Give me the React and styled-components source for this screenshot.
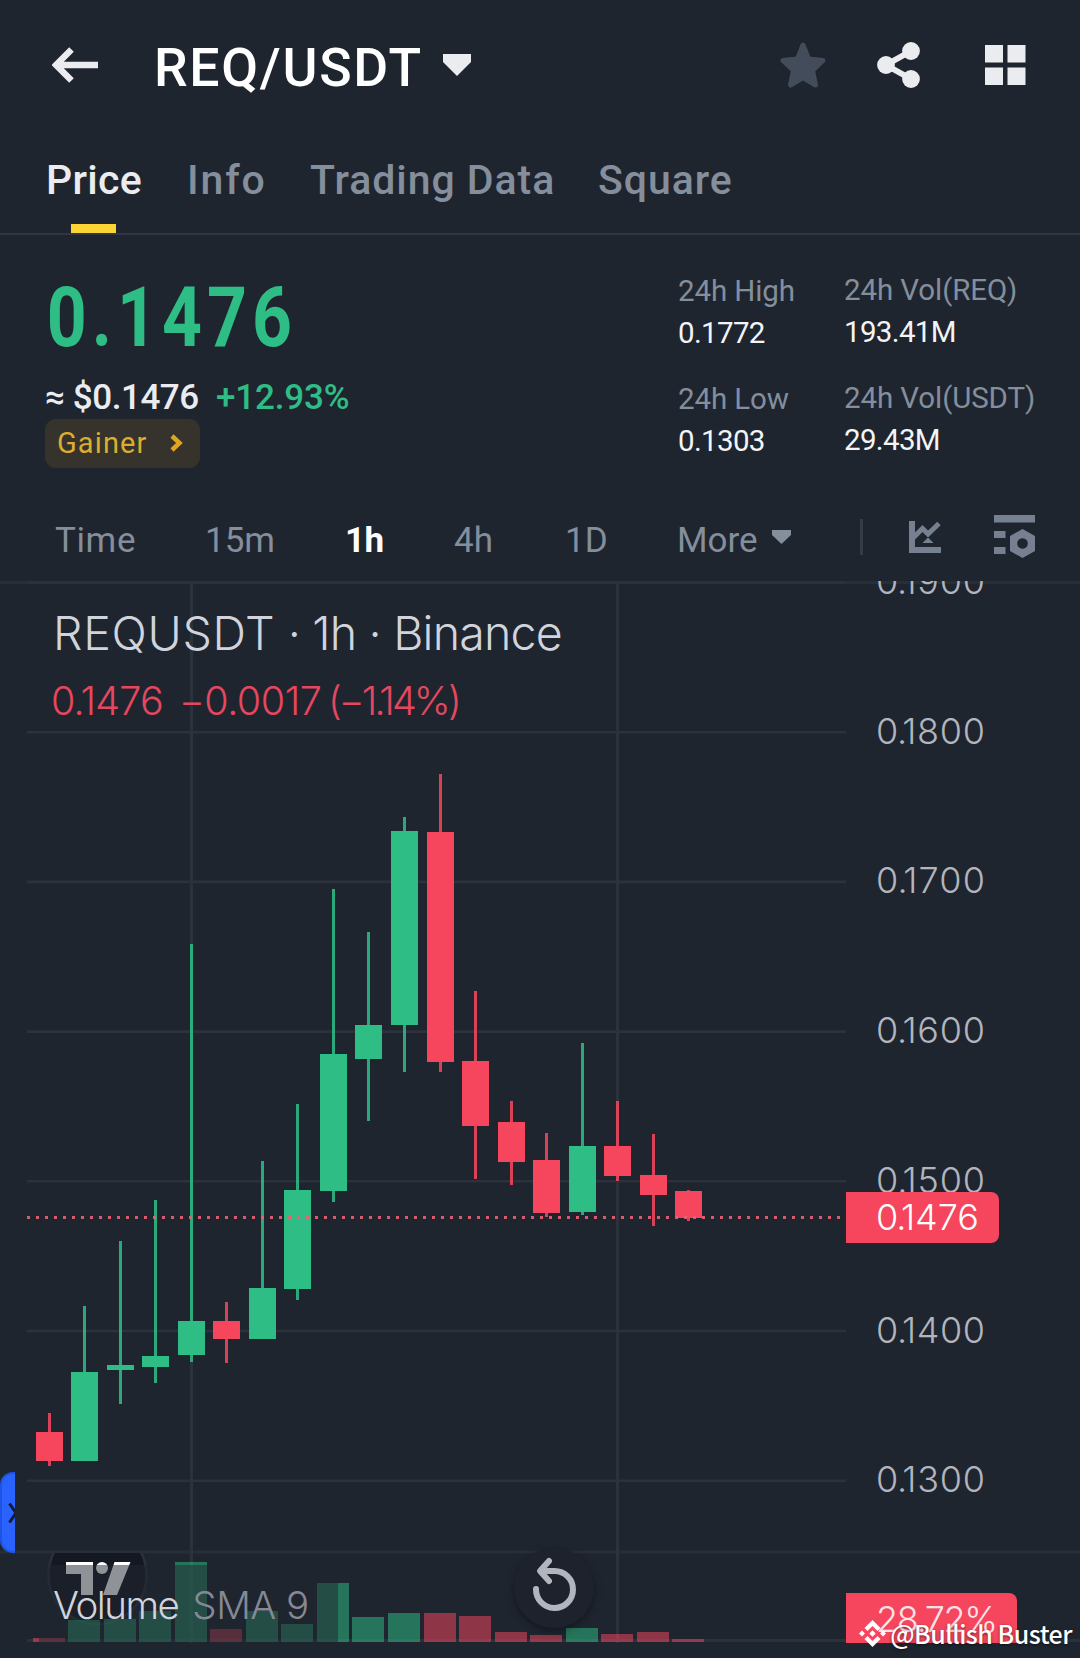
import React from "react"
import styled, { createGlobalStyle } from "styled-components"

const GREEN = "#2ebd85"
const RED = "#f6465d"
const BG = "#1f252f"
const MUTED = "#848e9c"

const GlobalStyle = createGlobalStyle`
  body {
    margin: 0;
    background: ${BG};
    overflow: hidden;
  }
  * {
    box-sizing: border-box;
  }
`

const Page = styled.main`
  width: 1080px;
  height: 1658px;
  display: flex;
  flex-direction: column;
  background: ${BG};
  color: #eaecef;
  font-family: Roboto, "Liberation Sans", sans-serif;
  white-space: nowrap;
  overflow: hidden;
`

const Header = styled.header`
  height: 132px;
  padding: 0 54px 2px 52px;
  display: flex;
  align-items: center;
`

const Title = styled.h1`
  width: 268px;
  margin: 5px 21px 0 56px;
  font-size: 53.5px;
  line-height: 60px;
  font-weight: 500;
  letter-spacing: 1.7px;
  color: #fff;
`

const HeaderActions = styled.div`
  flex: 1;
  display: flex;
  justify-content: flex-end;
  align-items: center;
`

const ShareIcon = styled.svg`
  margin: 0 65px 0 51px;
`

const Tabs = styled.nav`
  height: 103px;
  display: grid;
  grid-template-columns: 141px 123px 288px 200px;
  padding-left: 46px;
  border-bottom: 2px solid #2f3641;
`

const Tab = styled.a`
  position: relative;
  padding-top: 20px;
  font-size: 41px;
  line-height: 56px;
  font-weight: 500;
  letter-spacing: ${p => p.$spacing || 0}px;
  color: ${p => (p.$active ? "#eaecef" : MUTED)};
  &::after {
    content: "";
    display: ${p => (p.$active ? "block" : "none")};
    position: absolute;
    left: 25px;
    bottom: 0;
    width: 45px;
    height: 9px;
    background: #fcd535;
  }
`

const Summary = styled.section`
  height: 265px;
  padding-top: 34px;
  padding-left: 45px;
  display: grid;
  grid-template-columns: 633px 166px 1fr;
`

const LastPrice = styled.div`
  height: 96px;
  padding-left: 2px;
  font-size: 83px;
  line-height: 97px;
  font-weight: 700;
  letter-spacing: 6px;
  color: ${GREEN};
  transform: scaleX(0.84);
  transform-origin: left center;
`

const SubPrice = styled.div`
  height: 53.5px;
  padding-top: 13px;
  display: flex;
  font-size: 35px;
  line-height: 40px;
  font-weight: 500;
`

const Fiat = styled.span`
  width: 171px;
  letter-spacing: -0.45px;
`

const Change = styled.span`
  color: ${GREEN};
  letter-spacing: -0.15px;
`

const Badge = styled.span`
  width: 155px;
  height: 49px;
  padding: 0 17px 0 12px;
  display: flex;
  align-items: center;
  justify-content: space-between;
  border-radius: 11px;
  background: #35332b;
  color: #dcae30;
  font-size: 29px;
  letter-spacing: 1.1px;
`

const StatColumn = styled.dl`
  margin: ${p => p.$top}px 0 0;
  font-size: 29.5px;
`

const StatLabel = styled.dt`
  line-height: 42px;
  letter-spacing: -0.1px;
  color: ${MUTED};
`

const StatValue = styled.dd`
  margin: 0 0 24px;
  line-height: 42px;
  letter-spacing: -0.65px;
  color: #f2f4f6;
`

const Intervals = styled.div`
  height: 81px;
  padding: 0 44px 1px 55px;
  display: grid;
  grid-template-columns: 150px 140px 109px 111px 112px 183px 49px 85px 1fr;
  align-items: center;
  font-size: 35px;
  color: ${MUTED};
`

const Interval = styled.span`
  display: flex;
  align-items: center;
  gap: 14px;
  letter-spacing: ${p => p.$spacing || 0}px;
  ${p => p.$active && "color: #fff; font-weight: 700;"}
  svg {
    margin-bottom: 6px;
  }
`

const Separator = styled.i`
  width: 3px;
  height: 36px;
  margin-bottom: 6px;
  background: #333b47;
`

const ToolIcon = styled.svg`
  margin-bottom: 7px;
`

const Chart = styled.section`
  position: relative;
  height: 1062px;
  font-family: Inter, "Liberation Sans", sans-serif;
  font-weight: 300;
  overflow: hidden;
`

const Plot = styled.svg`
  display: block;
`

const AxisText = styled.text`
  font-size: 36px;
  fill: ${p => p.$fill || "#b2b5be"};
`

const Legend = styled.div`
  position: absolute;
  left: 51px;
  top: 22px;
`

const Symbol = styled.div`
  padding-left: 2px;
  font-size: 46.5px;
  line-height: 60px;
  letter-spacing: -0.8px;
  color: #d1d4dc;
  span {
    letter-spacing: 0.7px;
  }
`

const SymbolChange = styled.div`
  margin-top: 8px;
  display: grid;
  grid-template-columns: 128px 149px auto;
  font-size: 39.5px;
  line-height: 60px;
  color: #e5485e;
`

const ChangePart = styled.span`
  letter-spacing: ${p => p.$spacing}px;
`

const VolumeLegend = styled.div`
  position: absolute;
  left: 53px;
  top: 994px;
  display: flex;
  gap: 14px;
  font-size: 38.5px;
  line-height: 60px;
  color: #d1d4dc;
  letter-spacing: -1.5px;
  span {
    color: #868993;
    letter-spacing: -0.5px;
  }
`

const DrawerHandle = styled.button`
  position: absolute;
  left: 0;
  top: 891px;
  width: 15px;
  height: 81px;
  padding: 0 0 0 6px;
  border: 3px solid #1e53e5;
  border-width: 2px 0 2px 2px;
  border-radius: 13px 0 0 13px;
  background: #2962ff;
  overflow: hidden;
  display: flex;
  align-items: center;
  svg {
    flex: none;
  }
`

const ResetButton = styled.button`
  position: absolute;
  left: 514px;
  top: 967px;
  width: 80px;
  height: 80px;
  padding: 0;
  border: 0;
  border-radius: 50%;
  background: #1e222d;
  box-shadow: 0 3px 8px rgba(0, 0, 0, 0.4);
`

const Footer = styled.div`
  position: relative;
  height: 15px;
`

const Watermark = styled.div`
  position: absolute;
  right: 8px;
  bottom: 7px;
  display: flex;
  align-items: center;
  gap: 4px;
  font-family: "Noto Sans CJK SC", "Noto Sans", sans-serif;
  font-size: 25px;
  line-height: 36px;
  font-weight: 500;
  letter-spacing: -0.5px;
  color: #fff;
  text-shadow: 0 1px 3px rgba(0, 0, 0, 0.6);
`

// x centre, wick top, wick bottom, body top, body bottom, rising
const candles = [
  [49.5, 1413, 1466, 1432, 1461, false],
  [84.5, 1306, 1461, 1372, 1461, true],
  [120.5, 1241, 1404, 1365, 1370, true],
  [155.5, 1200, 1383, 1356, 1367, true],
  [191.5, 944, 1362, 1321, 1355, true],
  [226.5, 1302, 1363, 1321, 1339, false],
  [262.5, 1161, 1339, 1288, 1339, true],
  [297.5, 1104, 1300, 1190, 1289, true],
  [333.5, 889, 1202, 1054, 1191, true],
  [368.5, 932, 1121, 1025, 1059, true],
  [404.5, 817, 1072, 831, 1025, true],
  [440.5, 774, 1072, 832, 1062, false],
  [475.5, 991, 1179, 1061, 1126, false],
  [511.5, 1101, 1185, 1122, 1162, false],
  [546.5, 1133, 1217, 1160, 1213, false],
  [582.5, 1043, 1215, 1146, 1212, true],
  [617.5, 1101, 1181, 1146, 1176, false],
  [653.5, 1134, 1226, 1175, 1195, false],
  [688.5, 1190, 1221, 1191, 1218, false],
]

const volumeTops = [
  1638, 1620, 1619, 1611, 1562, 1629, 1611, 1624, 1583, 1617, 1613, 1613, 1616,
  1632, 1635, 1628, 1634, 1632, 1639,
]

const prices = ["0.1900", "0.1800", "0.1700", "0.1600", "0.1500", "0.1400", "0.1300"]

function Caret({ width, height, color }) {
  return (
    <svg width={width} height={height} viewBox="0 0 28 22" preserveAspectRatio="none">
      <path d="M0 0H28V8L14 22L0 8Z" fill={color} />
    </svg>
  )
}

function ChartPlot() {
  return (
    <Plot width="1080" height="1062" viewBox="0 581 1080 1062">
      <path d="M0 582.5H1080M0 1552H1080" stroke="#282e38" strokeWidth="3" />
      {prices.map((p, i) => (
        <path
          key={p}
          d={`M27 ${582.5 + i * 149.7}H846`}
          stroke="#2c323c"
          strokeWidth="2.6"
        />
      ))}
      <path d="M27 1640.5H1080" stroke="#2b313b" strokeWidth="3" />
      <path d="M191.5 581V1643M617.5 581V1643" stroke="#2c323c" strokeWidth="3" />

      <clipPath id="volume-pane">
        <rect x="0" y="1553" width="1080" height="90" />
      </clipPath>
      <circle
        cx="97.5"
        cy="1575"
        r="49"
        fill="#141823"
        stroke="#2b303a"
        strokeWidth="2.5"
        clipPath="url(#volume-pane)"
      />
      <g fill="#fff">
        <path d="M66 1562H93V1595H81V1574H66ZM114.5 1562H130.5L117 1595H103Z" />
        <circle cx="102" cy="1568" r="6" />
      </g>

      {volumeTops.map((top, i) => (
        <rect
          key={i}
          x={Math.floor(candles[i][0] - 16.5)}
          y={top}
          width="32"
          height={1642 - top}
          fill={candles[i][5] ? GREEN : RED}
          opacity="0.52"
        />
      ))}
      <rect x="39" y="1565" width="299" height="77" fill={BG} opacity="0.5" />

      {candles.map(([x, high, low, top, bottom, up]) => (
        <g key={x} fill={up ? GREEN : RED}>
          <rect x={x - 1.5} y={high} width="3" height={low - high} opacity="0.87" />
          <rect x={x - 13.5} y={top} width="27" height={bottom - top} />
        </g>
      ))}
      <path d="M27 1217.5H842" stroke="#ee6072" strokeWidth="3" strokeDasharray="3 6" opacity="0.9" />

      {prices.map((p, i) => (
        <AxisText key={p} x="876" y={594 + i * 149.7} dx="0 -1 -2.5" textLength="109">
          {p}
        </AxisText>
      ))}
      <path d="M846 1192H991a8 8 0 0 1 8 8V1235a8 8 0 0 1 -8 8H846Z" fill={RED} />
      <AxisText $fill="#fff" x="876" y="1230" dx="0 -1 -2.5" textLength="103">
        0.1476
      </AxisText>
      <path d="M846 1593H1009a8 8 0 0 1 8 8V1643H846Z" fill={RED} />
      <AxisText $fill="#fde3e7" x="876" y="1631.5" textLength="122">
        28.72%
      </AxisText>
    </Plot>
  )
}

function App() {
  return (
    <Page>
      <GlobalStyle />
      <Header>
        <svg width="46" height="36" viewBox="0 0 46 36">
          <path d="M19.500 2.500L4 18L19.500 33.500M4 18H46" fill="none" stroke="#eaecef" strokeWidth="6.500" />
        </svg>
        <Title>REQ/USDT</Title>
        <Caret width={28} height={22} color="#eaecef" />
        <HeaderActions>
          <svg width="46" height="46" viewBox="0 0 46 46">
            <path
              d="M23 3L28.500 17L43 18.500L32.500 28.500L35.500 43L23 35.500L10.500 43L13.500 28.500L3 18.500L17.500 17Z"
              fill="#434c5a"
              stroke="#434c5a"
              strokeWidth="5"
              strokeLinejoin="round"
            />
          </svg>
          <ShareIcon width="43" height="46" viewBox="0 0 43 46">
            <path d="M34 9L9 23L34 37" fill="none" stroke="#eaecef" strokeWidth="6" />
            <g fill="#eaecef">
              <circle cx="34" cy="9" r="8.900" />
              <circle cx="9" cy="23" r="8.900" />
              <circle cx="34" cy="37" r="8.900" />
            </g>
          </ShareIcon>
          <svg width="41" height="40" viewBox="0 0 41 40">
            <path d="M0 0H18V17.500H0ZM22.500 0H40.500V17.500H22.500ZM0 22.500H18V40H0ZM22.500 22.500H40.500V40H22.500Z" fill="#eaecef" />
          </svg>
        </HeaderActions>
      </Header>

      <Tabs>
        <Tab $active $spacing={0.3}>Price</Tab>
        <Tab $spacing={1.9}>Info</Tab>
        <Tab $spacing={0.95}>Trading Data</Tab>
        <Tab $spacing={0.95}>Square</Tab>
      </Tabs>

      <Summary>
        <div>
          <LastPrice>0.1476</LastPrice>
          <SubPrice>
            <Fiat>≈ $0.1476</Fiat>
            <Change>+12.93%</Change>
          </SubPrice>
          <Badge>
            Gainer
            <svg width="13" height="18" viewBox="0 0 13 18">
              <path d="M2 2L9.500 9L2 16" fill="none" stroke="#e0a51f" strokeWidth="4.500" />
            </svg>
          </Badge>
        </div>
        <StatColumn $top={1}>
          <StatLabel>24h High</StatLabel>
          <StatValue>0.1772</StatValue>
          <StatLabel>24h Low</StatLabel>
          <StatValue>0.1303</StatValue>
        </StatColumn>
        <StatColumn $top={0}>
          <StatLabel>24h Vol(REQ)</StatLabel>
          <StatValue>193.41M</StatValue>
          <StatLabel>24h Vol(USDT)</StatLabel>
          <StatValue>29.43M</StatValue>
        </StatColumn>
      </Summary>

      <Intervals>
        <Interval $spacing={0.6}>Time</Interval>
        <Interval>15m</Interval>
        <Interval $active $spacing={-0.5}>1h</Interval>
        <Interval>4h</Interval>
        <Interval>1D</Interval>
        <Interval>
          More
          <Caret width={19} height={14} color={MUTED} />
        </Interval>
        <Separator />
        <ToolIcon width="32" height="32" viewBox="0 0 32 32">
          <g fill="none" stroke="#768091">
            <path d="M3 0V29H32" strokeWidth="6" />
            <path d="M4 17L13.500 7.500L19 13L30 2.500" strokeWidth="5" />
          </g>
          <path d="M13.500 22L19 16.500L24.500 22Z" fill="#768091" />
        </ToolIcon>
        <ToolIcon width="41" height="43" viewBox="0 0 41 43">
          <path d="M0 0H41V7.500H0ZM0 16H11.500V23H0ZM0 32H11.500V39H0Z" fill="#768091" />
          <path
            fillRule="evenodd"
            d="M28.500 14L41 21V36L28.500 43L16 36V21ZM28.500 23.200a5.300 5.300 0 1 0 0.010 0Z"
            fill="#768091"
          />
        </ToolIcon>
      </Intervals>

      <Chart>
        <ChartPlot />
        <Legend>
          <Symbol>
            <span>REQUSDT</span> · 1h · Binance
          </Symbol>
          <SymbolChange>
            <ChangePart $spacing={-0.8}>0.1476</ChangePart>
            <ChangePart $spacing={-0.5}>−0.0017</ChangePart>
            <ChangePart $spacing={-2.9}>(−1.14%)</ChangePart>
          </SymbolChange>
        </Legend>
        <VolumeLegend>
          Volume <span>SMA 9</span>
        </VolumeLegend>
        <DrawerHandle>
          <svg width="12" height="22" viewBox="0 0 12 22">
            <path d="M1.500 1.500L8 11L1.500 20.500" fill="none" stroke="#131b33" strokeWidth="3" />
          </svg>
        </DrawerHandle>
        <ResetButton>
          <svg width="80" height="80" viewBox="0 0 80 80">
            <path
              d="M22 41A18.500 18.500 0 1 0 40.500 23H27M35 13L26 23L35 33"
              fill="none"
              stroke="#b2b5be"
              strokeWidth="6"
              strokeLinecap="round"
              strokeLinejoin="round"
            />
          </svg>
        </ResetButton>
      </Chart>

      <Footer>
        <Watermark>
          <svg width="27" height="27" viewBox="0 0 27 27" fill="#fff">
            <path d="M13.500 0L21.500 8L18.500 11L13.500 6L8.500 11L5.500 8Z" />
            <path d="M13.500 27L21.500 19L18.500 16L13.500 21L8.500 16L5.500 19Z" />
            <path d="M13.500 10.300L16.700 13.500L13.500 16.700L10.300 13.500Z" />
            <path d="M3 10.500L6 13.500L3 16.500L0 13.500ZM24 10.500L27 13.500L24 16.500L21 13.500Z" />
          </svg>
          @Bullish Buster
        </Watermark>
      </Footer>
    </Page>
  )
}

export default App
